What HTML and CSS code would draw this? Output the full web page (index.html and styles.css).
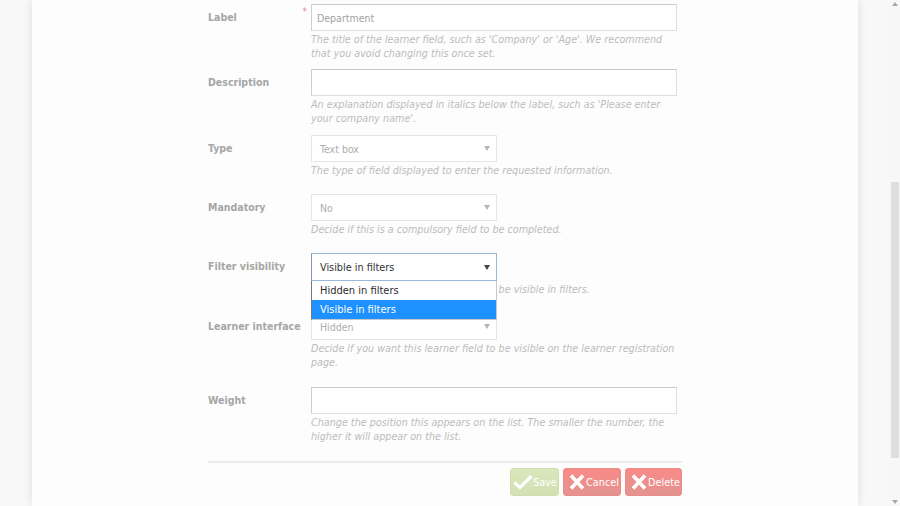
FILE: index.html
```html
<!DOCTYPE html>
<html lang="en">
<head>
<meta charset="utf-8">
<title>Learner field</title>
<link rel="stylesheet" href="styles.css">
</head>
<body>
<div class="screen">
  <div class="viewport">
    <div class="card">
      <form class="form">
        <div class="row tight">
          <div class="label">Label<span class="req">*</span></div>
          <div class="field">
            <div class="input"><span class="value">Department</span></div>
            <div class="help">The title of the learner field, such as 'Company' or 'Age'. We recommend that you avoid changing this once set.</div>
          </div>
        </div>
        <div class="row tight2">
          <div class="label">Description</div>
          <div class="field">
            <div class="input"></div>
            <div class="help">An explanation displayed in italics below the label, such as 'Please enter your company name'.</div>
          </div>
        </div>
        <div class="row">
          <div class="label">Type</div>
          <div class="field">
            <div class="select"><span class="sel-text">Text box</span><svg class="arrow" width="6" height="5" viewBox="0 0 6 5"><path d="M0 0H6L3 5Z"/></svg></div>
            <div class="help">The type of field displayed to enter the requested information.</div>
          </div>
        </div>
        <div class="row">
          <div class="label">Mandatory</div>
          <div class="field">
            <div class="select"><span class="sel-text">No</span><svg class="arrow" width="6" height="5" viewBox="0 0 6 5"><path d="M0 0H6L3 5Z"/></svg></div>
            <div class="help">Decide if this is a compulsory field to be completed.</div>
          </div>
        </div>
        <div class="row">
          <div class="label">Filter visibility</div>
          <div class="field">
            <div class="select-wrap">
              <div class="select open"><span class="sel-text">Visible in filters</span><svg class="arrow" width="6" height="5" viewBox="0 0 6 5"><path d="M0 0H6L3 5Z"/></svg></div>
              <ul class="dropdown">
                <li class="opt">Hidden in filters</li>
                <li class="opt active">Visible in filters</li>
              </ul>
            </div>
            <div class="help">Decide if you want this learner field to be visible in filters.</div>
          </div>
        </div>
        <div class="row wide">
          <div class="label">Learner interface</div>
          <div class="field">
            <div class="select"><span class="sel-text">Hidden</span><svg class="arrow" width="6" height="5" viewBox="0 0 6 5"><path d="M0 0H6L3 5Z"/></svg></div>
            <div class="help">Decide if you want this learner field to be visible on the learner registration page.</div>
          </div>
        </div>
        <div class="row last">
          <div class="label">Weight</div>
          <div class="field">
            <div class="input"></div>
            <div class="help">Change the position this appears on the list. The smaller the number, the higher it will appear on the list.</div>
          </div>
        </div>
        <div class="actions">
          <button type="button" class="btn save"><svg width="20" height="16" viewBox="0 0 20 16"><path d="M1.5 8.5L7 13.5L18.5 2" fill="none" stroke="#fff" stroke-width="3.2" stroke-linejoin="round"/></svg>Save</button>
          <button type="button" class="btn danger cancel"><svg width="18" height="16" viewBox="0 0 18 16"><path d="M3 1.5L15 14.5M15 1.5L3 14.5" fill="none" stroke="#fff" stroke-width="3.6"/></svg>Cancel</button>
          <button type="button" class="btn danger delete"><svg width="18" height="16" viewBox="0 0 18 16"><path d="M3 1.5L15 14.5M15 1.5L3 14.5" fill="none" stroke="#fff" stroke-width="3.6"/></svg>Delete</button>
        </div>
      </form>
    </div>
  </div>
  <div class="scrollbar">
    <svg class="sb-arrow" width="10" height="8" viewBox="0 0 10 8"><path d="M2 6H8L5 2Z" fill="#a8a8a8"/></svg>
    <div class="sb-track">
      <div class="sb-thumb"></div>
    </div>
    <svg class="sb-arrow" width="10" height="8" viewBox="0 0 10 8"><path d="M2 2H8L5 6Z" fill="#a8a8a8"/></svg>
  </div>
</div>
</body>
</html>
```
FILE: styles.css
```css
* { box-sizing: border-box; }
html, body { margin: 0; padding: 0; }
body {
  font-family: "DejaVu Sans Condensed", "DejaVu Sans", Verdana, sans-serif;
  font-size: 10.5px;
  background: #f8f8f8;
  overflow: hidden;
}
.screen {
  display: flex;
  width: 900px;
  height: 506px;
  overflow: hidden;
}
.viewport {
  flex: 1;
  padding: 0 32px;
  display: flex;
}
.card {
  flex: 1;
  background: #fdfdfd;
  box-shadow: 0 0 9px rgba(0, 0, 0, 0.11);
  padding: 4px 176px 0 176px;
}
.form { margin: 0; }
.row {
  display: flex;
  margin-bottom: 16px;
}
.row.tight { margin-bottom: 8px; }
.row.tight2 { margin-bottom: 9px; }
.row.wide { margin-bottom: 17px; }
.row.last { margin-bottom: 17px; }
.label {
  width: 103px;
  flex: none;
  display: flex;
  justify-content: space-between;
  padding-top: 6px;
  padding-right: 4px;
  line-height: 14px;
  font-weight: bold;
  color: #a6a6a6;
}
.req {
  color: #f58a8a;
  font-weight: normal;
  font-size: 10px;
  line-height: 10px;
  margin-top: -3px;
}
.field {
  width: 366px;
  flex: none;
}
.input {
  height: 27px;
  border: 1px solid #dedede;
  border-top-color: #c9c9c9;
  border-left-color: #cfcfcf;
  background: #fff;
  padding: 0 5px;
  display: flex;
  align-items: center;
}
.value { color: #a2a2a2; }
.help {
  margin-top: 2px;
  margin-right: -4px;
  line-height: 14px;
  font-style: italic;
  font-size: 10.7px;
  color: #bcbcbc;
}
.select-wrap {
  position: relative;
  width: 186px;
}
.select {
  width: 186px;
  height: 27px;
  border: 1px solid #e6e6e6;
  background: #fff;
  padding: 0 6px 0 8px;
  display: flex;
  align-items: center;
  justify-content: space-between;
  color: #adadad;
}
.select .arrow { fill: #b5b5b5; }
.select.open {
  height: 28px;
  border-color: #9bb8dc;
  border-left-color: #8a9ab0;
  color: #333;
  font-size: 10.8px;
}
.select.open .arrow { fill: #444; }
.dropdown {
  position: absolute;
  left: 0;
  top: 28px;
  width: 186px;
  margin: 0;
  padding: 0;
  list-style: none;
  background: #fff;
  border: 1px solid #c8c8c8;
  border-left-color: #777;
  border-top: none;
  z-index: 2;
}
.opt {
  height: 19px;
  line-height: 19px;
  padding-left: 8px;
  color: #2b2b2b;
  font-size: 11px;
}
.opt.active {
  background: #1e90ff;
  color: #fff;
}
.actions {
  border-top: 2px solid #ececec;
  padding-top: 5px;
  display: flex;
  justify-content: flex-end;
  gap: 4px;
}
.btn {
  height: 28px;
  border-radius: 3px;
  border: 1px solid transparent;
  font-family: inherit;
  font-size: 10.8px;
  color: #fff;
  display: flex;
  align-items: center;
  padding: 0 0 0 2px;
  cursor: pointer;
}
.btn svg { flex: none; }
.btn.save {
  width: 49px;
  background: linear-gradient(#d9e8bc, #d1e1b2);
  border-color: #cedcb0;
}
.btn.danger {
  background: linear-gradient(#f98a86, #e39390);
  border-color: #e98c88;
  padding-left: 4px;
}
.btn.cancel { width: 58px; }
.btn.delete { width: 57px; }
.scrollbar {
  width: 10px;
  flex: none;
  background: #f7f7f7;
  display: flex;
  flex-direction: column;
}
.sb-arrow { flex: none; display: block; }
.sb-track {
  flex: 1;
  padding-top: 174px;
  padding-bottom: 40px;
  display: flex;
  flex-direction: column;
}
.sb-thumb {
  flex: 1;
  margin: 0 1px;
  background: #dfdfdf;
}
```
